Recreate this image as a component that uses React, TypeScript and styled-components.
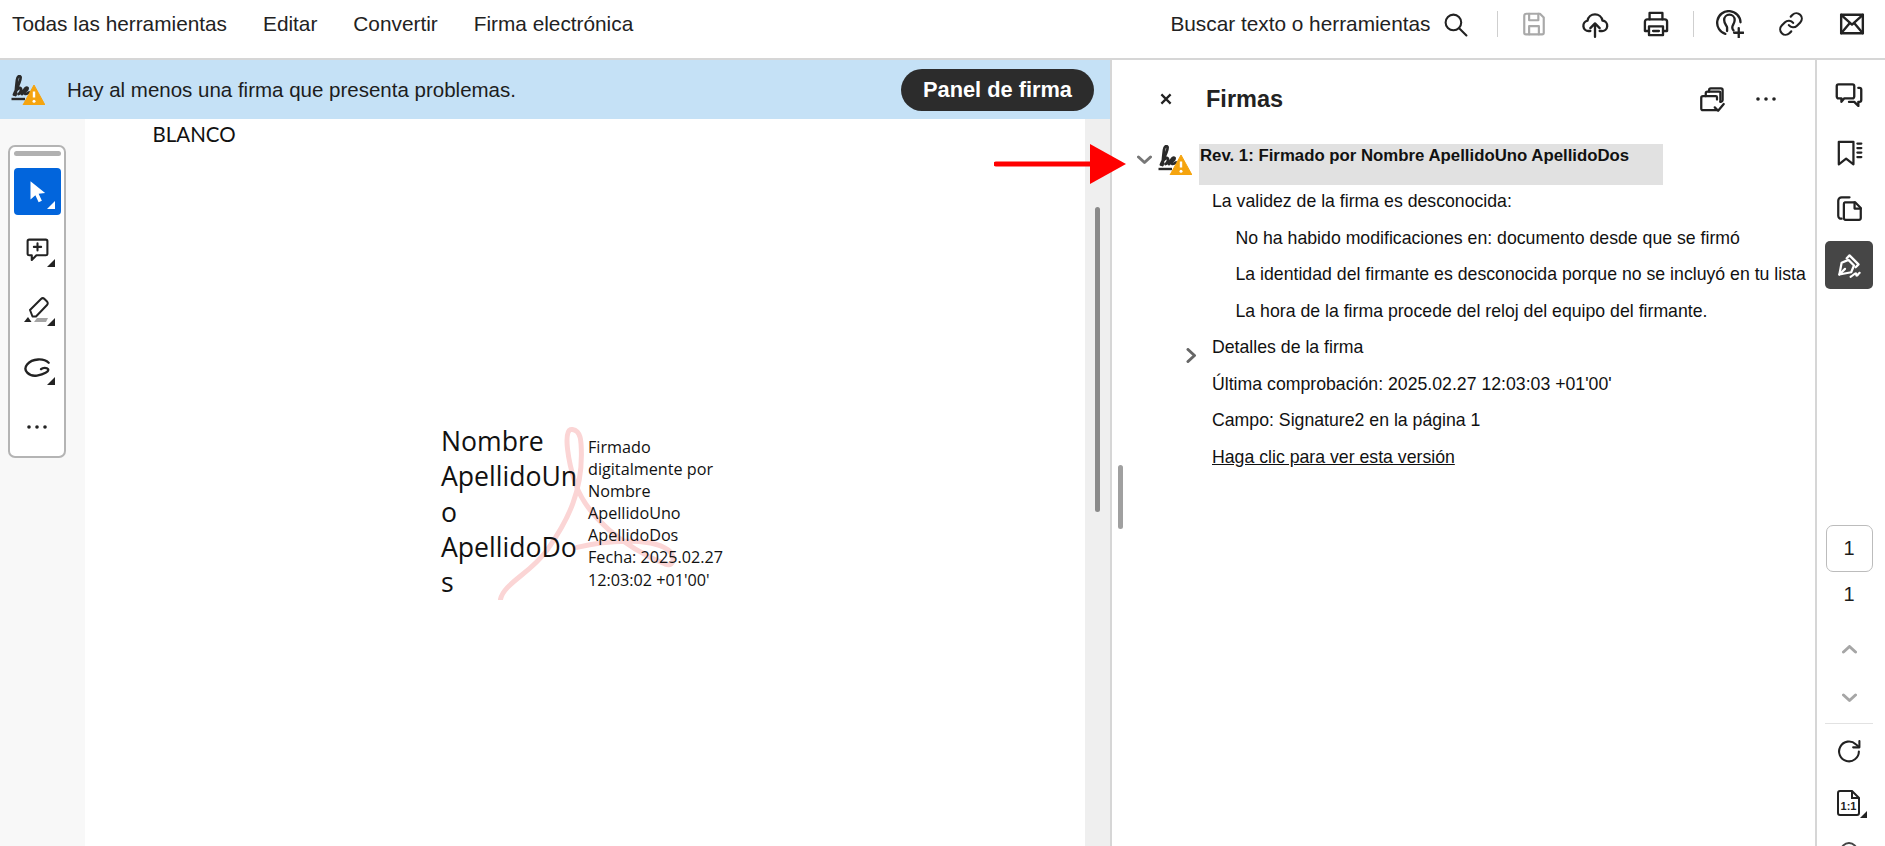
import React, { FC, ReactNode } from "react";
import styled, { createGlobalStyle } from "styled-components";

const GlobalStyle = createGlobalStyle`
  html, body {
    margin: 0;
    padding: 0;
    height: 846px;
    overflow: hidden;
    background: #fff;
    font-family: "Liberation Sans", Arial, sans-serif;
    color: #1d1d1d;
  }
`;

const Shell = styled.div`
  width: 1885px;
  height: 846px;
  display: flex;
  flex-direction: column;
  overflow: hidden;
`;

// barra superior
const TopBar = styled.header`
  height: 48px;
  flex: none;
  display: flex;
  align-items: center;
  padding: 0 0 10px 12px;
  border-bottom: 2px solid #d6d6d6;
  font-size: 20.8px;
  color: #222;
`;

const Nav = styled.nav`
  display: flex;
  gap: 36px;
`;

const TopTools = styled.div`
  margin-left: auto;
  display: flex;
  align-items: center;
  padding-right: 2.5px;
`;

const SearchIcon = styled.span`
  display: flex;
  margin-left: 12px;
  margin-right: 29px;
`;

const ToolSep = styled.span<{ $lead?: number }>`
  width: 1px;
  height: 26px;
  background: #cfcfcf;
  margin-left: ${(p) => p.$lead ?? 0}px;
  margin-right: 6px;
`;

const ToolSlot = styled.span`
  width: 61px;
  display: flex;
  justify-content: center;
`;

const Main = styled.div`
  flex: 1;
  display: flex;
  position: relative;
  min-height: 0;
`;

// zona izquierda
const DocColumn = styled.section`
  width: 1110px;
  flex: none;
  display: flex;
  flex-direction: column;
  border-right: 2px solid #d6d6d6;
`;

const Banner = styled.div`
  height: 59px;
  flex: none;
  display: flex;
  align-items: center;
  background: #c5e1f6;
  padding: 0 16px 0 11px;
  font-size: 20.5px;
`;

const BannerText = styled.span`
  margin-left: 22px;
`;

const PanelButton = styled.button`
  margin-left: auto;
  width: 193px;
  height: 42px;
  border: none;
  border-radius: 21px;
  background: #2c2c2c;
  color: #fff;
  font: bold 21.8px "Liberation Sans", Arial, sans-serif;
  padding: 0;
`;

const DocBody = styled.div`
  flex: 1;
  display: flex;
  min-height: 0;
`;

const Gutter = styled.div`
  width: 85px;
  flex: none;
  background: #f8f8f8;
  padding: 26px 0 0 8px;
  box-sizing: border-box;
`;

const FloatTools = styled.div`
  width: 58px;
  height: 313px;
  box-sizing: border-box;
  border: 2px solid #b4b4b4;
  border-radius: 7px;
  background: #fff;
  display: flex;
  flex-direction: column;
  align-items: center;
  padding-top: 4px;
`;

const Grip = styled.div`
  width: 47px;
  height: 5px;
  border-radius: 3px;
  background: #b1b1b1;
  margin-bottom: 12px;
`;

const ToolButton = styled.div<{ $active?: boolean; $corner?: boolean }>`
  width: 47px;
  height: ${(p) => (p.$active ? "48px" : "60px")};
  border-radius: 4px;
  margin-bottom: ${(p) => (p.$active ? "5px" : "0")};
  background: ${(p) => (p.$active ? "#0265dc" : "transparent")};
  position: relative;
  display: flex;
  align-items: center;
  justify-content: center;
  &::after {
    content: "";
    display: ${(p) => (p.$corner === false ? "none" : "block")};
    position: absolute;
    right: 6px;
    bottom: ${(p) => (p.$active ? "6px" : "12px")};
    border-style: solid;
    border-width: 0 0 8px 8px;
    border-color: transparent transparent ${(p) => (p.$active ? "#fff" : "#222")} transparent;
  }
`;

const Page = styled.div`
  flex: 1;
  background: #fff;
  overflow: hidden;
`;

const BlancoText = styled.div`
  height: 30px;
  padding-left: 67.5px;
  font: 20.5px/30px Lato, sans-serif;
  color: #111;
`;

const Stamp = styled.div`
  position: relative;
  display: flex;
  margin: 275px 0 0 356px;
`;

const StampName = styled.div`
  width: 147px;
  flex: none;
  font: 26.6px/35.3px "Open Sans", sans-serif;
  color: #111;
  position: relative;
`;

const StampInfo = styled.div`
  padding-top: 12px;
  font: 16.2px/22.1px "Open Sans", sans-serif;
  color: #111;
  position: relative;
`;

const StampLine = styled.div`
  white-space: nowrap;
`;

const StampLogo = styled.svg`
  position: absolute;
  left: 56px;
  top: 3px;
  width: 180px;
  height: 173px;
`;

const ScrollStrip = styled.div`
  width: 25px;
  flex: none;
  background: #efefef;
  padding: 88px 0 0 10px;
  box-sizing: border-box;
`;

const ScrollThumb = styled.div`
  width: 5px;
  height: 305px;
  border-radius: 3px;
  background: #8a8a8a;
`;

const Sash = styled.div`
  position: absolute;
  left: 1118px;
  top: 405px;
  width: 5px;
  height: 64px;
  border-radius: 3px;
  background: #a0a0a0;
`;

const RedArrow = styled.svg`
  position: absolute;
  left: 994px;
  top: 83px;
  width: 134px;
  height: 42px;
`;

// panel de firmas
const SidePanel = styled.aside`
  flex: 1;
  min-width: 0;
  display: flex;
  flex-direction: column;
`;

const PanelHead = styled.div`
  height: 78px;
  flex: none;
  display: flex;
  align-items: center;
  padding: 0 38px 0 48px;
`;

const CloseMark = styled.span`
  width: 46px;
  display: flex;
`;

const PanelTitle = styled.h2`
  margin: 0;
  font-size: 23.5px;
  font-weight: bold;
  color: #222;
`;

const HeadTools = styled.div`
  margin-left: auto;
  display: flex;
  align-items: center;
  gap: 29px;
`;

const TreeRow = styled.div`
  margin-top: 6px;
  display: flex;
  padding-left: 25px;
  height: 41px;
`;

const TreeChevron = styled.span`
  width: 15px;
  height: 10px;
  margin: 11px 6px 0 0;
  display: flex;
`;

const TitleBar = styled.div`
  margin-left: 7px;
  width: 464px;
  background: #e1e1e1;
  padding: 3px 0 0 1px;
  box-sizing: border-box;
  font-size: 16.8px;
  line-height: 18px;
  font-weight: bold;
  color: #111;
  white-space: nowrap;
`;

const SigWrap = styled.span`
  display: flex;
  width: 34px;
  height: 30px;
  margin-top: 1px;
`;

const DetailList = styled.div`
  margin-top: -2px;
  padding-left: 100px;
`;

const DetailRow = styled.div<{ $indent?: boolean }>`
  height: 36.5px;
  line-height: 36.5px;
  font-size: 17.7px;
  color: #111;
  white-space: nowrap;
  display: flex;
  padding-left: ${(p) => (p.$indent ? "23.5px" : "0")};
`;

const RowChevron = styled.span`
  width: 26px;
  margin-left: -26px;
  margin-top: 19px;
  display: flex;
`;

const DetailLink = styled.span`
  text-decoration: underline;
`;

// barra derecha
const Rail = styled.nav`
  width: 70px;
  flex: none;
  border-left: 2px solid #d6d6d6;
  display: flex;
  flex-direction: column;
  align-items: center;
  padding: 8px 4px 0 0;
  overflow: hidden;
  height: 786px;
  box-sizing: border-box;
`;

const RailSlot = styled.div<{ $active?: boolean }>`
  width: 48px;
  height: ${(p) => (p.$active ? "48px" : "56px")};
  margin-top: ${(p) => (p.$active ? "5px" : "0")};
  border-radius: 5px;
  background: ${(p) => (p.$active ? "#464646" : "transparent")};
  display: flex;
  align-items: center;
  justify-content: center;
  flex: none;
`;

const PageBox = styled.div`
  margin-top: 236px;
  width: 47px;
  height: 47px;
  box-sizing: border-box;
  border: 1px solid #bcbcbc;
  border-radius: 7px;
  display: flex;
  align-items: center;
  justify-content: center;
  font-size: 20px;
  flex: none;
`;

const PageTotal = styled.div`
  margin-top: 8px;
  height: 28px;
  line-height: 28px;
  font-size: 20px;
  flex: none;
`;

const NavArrow = styled.div<{ $gap: number; $flip?: boolean }>`
  margin-top: ${(p) => p.$gap}px;
  display: flex;
  flex: none;
  transform: ${(p) => (p.$flip ? "rotate(180deg)" : "none")};
`;

const RailSep = styled.div`
  width: 48px;
  height: 1px;
  background: #e2e2e2;
  margin-top: 20px;
  flex: none;
`;

const RailTool = styled.div<{ $gap: number; $corner?: boolean }>`
  margin-top: ${(p) => p.$gap}px;
  display: flex;
  flex: none;
  position: relative;
  &::after {
    content: "";
    display: ${(p) => (p.$corner ? "block" : "none")};
    position: absolute;
    right: -6px;
    bottom: -2px;
    border-style: solid;
    border-width: 0 0 7px 7px;
    border-color: transparent transparent #222 transparent;
  }
`;

const CutIcon = styled.div`
  margin-top: 26px;
  width: 14px;
  height: 14px;
  border: 2px solid #444;
  border-radius: 50%;
  flex: none;
`;

interface IconProps {
  size?: number;
  color?: string;
  weight?: number;
  children: ReactNode;
}

const Icon: FC<IconProps> = ({ size = 26, color = "#222", weight = 2, children }) => (
  <svg
    width={size}
    height={size}
    viewBox="0 0 24 24"
    fill="none"
    stroke={color}
    strokeWidth={weight}
    strokeLinecap="round"
    strokeLinejoin="round"
  >
    {children}
  </svg>
);

const SignatureWarning: FC = () => (
  <svg width="34" height="30" viewBox="0 0 34 30" fill="none">
    <path
      d="M3 19.500C6 13 10.500 5 9.500 2 8.500 .5 6.500 1 6 5 5.500 9 5 14 4.500 20M5 16C7 13 9.500 12 10 14 10.500 16 8.500 19 7.500 19M11 19C13 15 15 11.500 16.500 13 17 15 14.500 16.500 13 16.500 12.500 19 15 20 18 17.500"
      stroke="#2a2a2a"
      strokeWidth="2.800"
      strokeLinecap="round"
    />
    <path d="M0.500 24H14" stroke="#2a2a2a" strokeWidth="2.400" />
    <path d="M23 10L12 30h22z" fill="#f5a40f" stroke="#f5a40f" strokeWidth="1" strokeLinejoin="round" />
    <path d="M23 16.500v6" stroke="#fff" strokeWidth="2.400" />
    <circle cx="23" cy="26.300" r="1.500" fill="#fff" />
  </svg>
);

const ChevronDown: FC<{ color?: string }> = ({ color = "#777" }) => (
  <svg width="15" height="10" viewBox="0 0 15 10" fill="none">
    <path d="M1.500 2L7.500 7.500 13.500 2" stroke={color} strokeWidth="3" strokeLinecap="round" strokeLinejoin="round" />
  </svg>
);

const MoreDots: FC = () => (
  <svg width="22" height="6" viewBox="0 0 22 6">
    <circle cx="3" cy="3" r="1.800" fill="#222" />
    <circle cx="11" cy="3" r="1.800" fill="#222" />
    <circle cx="19" cy="3" r="1.800" fill="#222" />
  </svg>
);

const detailRows = [
  { text: "La validez de la firma es desconocida:" },
  { text: "No ha habido modificaciones en: documento desde que se firmó", indent: true },
  { text: "La identidad del firmante es desconocida porque no se incluyó en tu lista", indent: true },
  { text: "La hora de la firma procede del reloj del equipo del firmante.", indent: true },
];

const App: FC = () => {
  return (
    <>
      <GlobalStyle />
      <Shell>
        <TopBar>
          <Nav>
            <span>Todas las herramientas</span>
            <span>Editar</span>
            <span>Convertir</span>
            <span>Firma electrónica</span>
          </Nav>
          <TopTools>
            <span>Buscar texto o herramientas</span>
            <SearchIcon>
              <Icon size={25}>
                <circle cx="10" cy="10" r="7.500" />
                <path d="M15.500 15.500L22.500 22.500" />
              </Icon>
            </SearchIcon>
            <ToolSep />
            <ToolSlot>
              <Icon color="#a9a9a9">
                <path d="M5 2.500h12.500L21 6v14a1.500 1.500 0 0 1-1.500 1.500h-15A1.500 1.500 0 0 1 3 20V4.500a2 2 0 0 1 2-2z" />
                <path d="M7.500 2.500v6h8.500v-6M7.500 21.500V14h9v7.500" />
              </Icon>
            </ToolSlot>
            <ToolSlot>
              <Icon size={28}>
                <path d="M8 18H6.500a4.500 4.500 0 0 1-.9-8.900 6.500 6.500 0 0 1 12.800-.1 4.500 4.500 0 0 1-.9 9H16" />
                <path d="M12 23V11.500M8 15.500l4-4 4 4" />
              </Icon>
            </ToolSlot>
            <ToolSlot>
              <Icon size={28}>
                <path d="M6.500 8V2.500h11V8" />
                <path d="M6 18H2.500v-8A2 2 0 0 1 4.500 8h15a2 2 0 0 1 2 2v8H18" />
                <path d="M6 14h12v7.500H6zM9.500 18h5" />
              </Icon>
            </ToolSlot>
            <ToolSep $lead={6} />
            <ToolSlot>
              <Icon size={28}>
                <path d="M8 20.500A10 10 0 1 1 21 10.500" />
                <path d="M9.500 18v-3c0-1.500-2.500-2.500-2.500-6.500a4.500 4.500 0 0 1 9 0c0 3-2 4.500-2 6v1c0 1 .5 1.500 1 2" />
                <path d="M19.500 15.500v8M15.500 19.500h8" />
              </Icon>
            </ToolSlot>
            <ToolSlot>
              <Icon>
                <path d="M10 13a5 5 0 0 0 7.540.54l3-3a5 5 0 0 0-7.070-7.070l-1.720 1.710" />
                <path d="M14 11a5 5 0 0 0-7.540-.54l-3 3a5 5 0 0 0 7.070 7.070l1.710-1.710" />
              </Icon>
            </ToolSlot>
            <ToolSlot>
              <Icon weight={2.200}>
                <path d="M2 3.500h20v17H2z" />
                <path d="M2 3.500l10 9 10-9M2 20.500l8-9.500M22 20.500l-8-9.500" />
              </Icon>
            </ToolSlot>
          </TopTools>
        </TopBar>

        <Main>
          <DocColumn>
            <Banner>
              <SignatureWarning />
              <BannerText>Hay al menos una firma que presenta problemas.</BannerText>
              <PanelButton>Panel de firma</PanelButton>
            </Banner>
            <DocBody>
              <Gutter>
                <FloatTools>
                  <Grip />
                  <ToolButton $active>
                    <svg width="26" height="26" viewBox="0 0 24 24">
                      <path d="M6 2v17l4.500-4 3 6.500 3-1.500-3-6.500 6-.5z" fill="#fff" />
                    </svg>
                  </ToolButton>
                  <ToolButton>
                    <Icon size={25}>
                      <path d="M4 2.500h16a1.500 1.500 0 0 1 1.500 1.500v12a1.500 1.500 0 0 1-1.500 1.500H11L6.500 22v-4.500H4A1.500 1.500 0 0 1 2.500 16V4A1.500 1.500 0 0 1 4 2.500z" />
                      <path d="M12 6v7M8.500 9.500h7" />
                    </Icon>
                  </ToolButton>
                  <ToolButton>
                    <svg width="28" height="26" viewBox="0 0 28 26" fill="none">
                      <path d="M7 14L18 3c1-1 2.500-1 3.500 0l2.500 2.500c1 1 1 2.500 0 3.500L13 20.500H9.500z" stroke="#222" strokeWidth="2" strokeLinejoin="round" />
                      <path d="M1 26l4-5 3.500 5z" fill="#222" />
                      <path d="M11 26l3-4h11l-2 4z" fill="#a4a4a4" />
                    </svg>
                  </ToolButton>
                  <ToolButton>
                    <Icon size={28}>
                      <path d="M22 7.500C18 3.500 8 3.500 3.500 9 -.5 14 5 19.500 12 18.500 18 17.500 22.500 15 21.500 13 20.500 11.500 17 11.500 15.500 13" />
                    </Icon>
                  </ToolButton>
                  <ToolButton $corner={false}>
                    <MoreDots />
                  </ToolButton>
                </FloatTools>
              </Gutter>
              <Page>
                <BlancoText>BLANCO</BlancoText>
                <Stamp>
                  <StampLogo viewBox="0 0 540 520" fill="none">
                    <path
                      d="M10 518C20 470 100 440 150 370 210 285 262 190 252 50 250 15 235 5 220 8 200 15 212 100 235 170 270 270 380 360 505 412 530 420 535 395 520 375 480 335 350 335 240 362"
                      stroke="#fbd5d5"
                      strokeWidth="15"
                      strokeLinecap="round"
                    />
                  </StampLogo>
                  <StampName>
                    {["Nombre", "ApellidoUn", "o", "ApellidoDo", "s"].map((line) => (
                      <StampLine key={line}>{line}</StampLine>
                    ))}
                  </StampName>
                  <StampInfo>
                    {[
                      "Firmado",
                      "digitalmente por",
                      "Nombre",
                      "ApellidoUno",
                      "ApellidoDos",
                      "Fecha: 2025.02.27",
                      "12:03:02 +01'00'",
                    ].map((line) => (
                      <StampLine key={line}>{line}</StampLine>
                    ))}
                  </StampInfo>
                </Stamp>
              </Page>
              <ScrollStrip>
                <ScrollThumb />
              </ScrollStrip>
            </DocBody>
          </DocColumn>

          <SidePanel>
            <PanelHead>
              <CloseMark>
                <svg width="12" height="12" viewBox="0 0 13 13" fill="none">
                  <path d="M1.500 1.500l10 10M11.500 1.500l-10 10" stroke="#222" strokeWidth="2.400" />
                </svg>
              </CloseMark>
              <PanelTitle>Firmas</PanelTitle>
              <HeadTools>
                <Icon size={27}>
                  <path d="M6 9V6.500A1.500 1.500 0 0 1 7.500 5H9V3.500A1.500 1.500 0 0 1 10.500 2h9A1.500 1.500 0 0 1 21 3.500v9a1.500 1.500 0 0 1-1.500 1.500H19" />
                  <path d="M9 5h9a1 1 0 0 1 1 1v8" />
                  <path d="M3.500 9H15a1 1 0 0 1 1 1v2M16 21.500H3.500A1.500 1.500 0 0 1 2 20V10.500A1.500 1.500 0 0 1 3.500 9" />
                  <path d="M14 19l3 3 5-6" />
                </Icon>
                <MoreDots />
              </HeadTools>
            </PanelHead>
            <TreeRow>
              <TreeChevron>
                <ChevronDown />
              </TreeChevron>
              <SigWrap>
                <SignatureWarning />
              </SigWrap>
              <TitleBar>Rev. 1: Firmado por Nombre ApellidoUno ApellidoDos</TitleBar>
            </TreeRow>
            <DetailList>
              {detailRows.map((row) => (
                <DetailRow key={row.text} $indent={row.indent}>
                  {row.text}
                </DetailRow>
              ))}
              <DetailRow>
                <RowChevron>
                  <svg width="11" height="15" viewBox="0 0 11 15" fill="none">
                    <path d="M2 1.500L8.500 7.500 2 13.500" stroke="#666" strokeWidth="3" strokeLinecap="round" strokeLinejoin="round" />
                  </svg>
                </RowChevron>
                Detalles de la firma
              </DetailRow>
              <DetailRow>Última comprobación: 2025.02.27 12:03:03 +01'00'</DetailRow>
              <DetailRow>Campo: Signature2 en la página 1</DetailRow>
              <DetailRow>
                <DetailLink>Haga clic para ver esta versión</DetailLink>
              </DetailRow>
            </DetailList>
          </SidePanel>

          <Rail>
            <RailSlot>
              <Icon size={28}>
                <path d="M3 2h12a1.500 1.500 0 0 1 1.500 1.500v9A1.500 1.500 0 0 1 15 14H8l-2.500 3V14H3a1.500 1.500 0 0 1-1.500-1.500v-9A1.500 1.500 0 0 1 3 2z" />
                <path d="M20 5h1a1.500 1.500 0 0 1 1.500 1.500v9A1.500 1.500 0 0 1 21 17h-1v3.500L16.500 17H12" />
              </Icon>
            </RailSlot>
            <RailSlot>
              <Icon size={27}>
                <path d="M2.500 2.500h13v20l-6.500-5-6.500 5z" />
                <path d="M19 4h3.500M19 8h3.500M19 12h3.500M19 16h3.500" />
              </Icon>
            </RailSlot>
            <RailSlot>
              <Icon size={27}>
                <path d="M5 21A2.500 2.500 0 0 1 2 18.500V5a3 3 0 0 1 3-3h7" />
                <path d="M8 6.500h9l5 5v9A1.500 1.500 0 0 1 20.500 22h-12A1.500 1.500 0 0 1 7 20.500V8a1.500 1.500 0 0 1 1-1.500z" />
                <path d="M16.500 6.500v5.500h5.500" />
              </Icon>
            </RailSlot>
            <RailSlot $active>
              <Icon size={27} color="#fff">
                <path d="M3 20L5 9.500 11 7l5 5-2.500 6z" />
                <path d="M9.500 5.500L12 3l8 8-2.500 2.500" />
                <path d="M3 20l5-5" />
                <path d="M13 22c2-1 3.500-3 4.500-3s0 2 1 2 1.500-2 2.500-2.500" />
              </Icon>
            </RailSlot>
            <PageBox>1</PageBox>
            <PageTotal>1</PageTotal>
            <NavArrow $gap={36} $flip>
              <ChevronDown color="#a6a6a6" />
            </NavArrow>
            <NavArrow $gap={39}>
              <ChevronDown color="#a6a6a6" />
            </NavArrow>
            <RailSep />
            <RailTool $gap={15}>
              <Icon size={25}>
                <path d="M21 12a9.500 9.500 0 1 1-3-7l3 2.500" />
                <path d="M21.500 2v6h-6" />
              </Icon>
            </RailTool>
            <RailTool $gap={26} $corner>
              <svg width="24" height="26" viewBox="0 0 24 26" fill="none">
                <path d="M3 1h12l7 7v15a2 2 0 0 1-2 2H3a2 2 0 0 1-2-2V3a2 2 0 0 1 2-2z" stroke="#222" strokeWidth="2" />
                <path d="M15 1v7h7" stroke="#222" strokeWidth="2" />
                <text x="11.500" y="20" fontFamily="Liberation Sans" fontWeight="bold" fontSize="11" fill="#222" textAnchor="middle">
                  1:1
                </text>
              </svg>
            </RailTool>
            <CutIcon />
          </Rail>

          <Sash />
          <RedArrow viewBox="0 0 134 42">
            <path d="M2 21H98" stroke="#f00" strokeWidth="5" strokeLinecap="round" />
            <path d="M96 1L132 21 96 41z" fill="#f00" />
          </RedArrow>
        </Main>
      </Shell>
    </>
  );
};

export default App;
